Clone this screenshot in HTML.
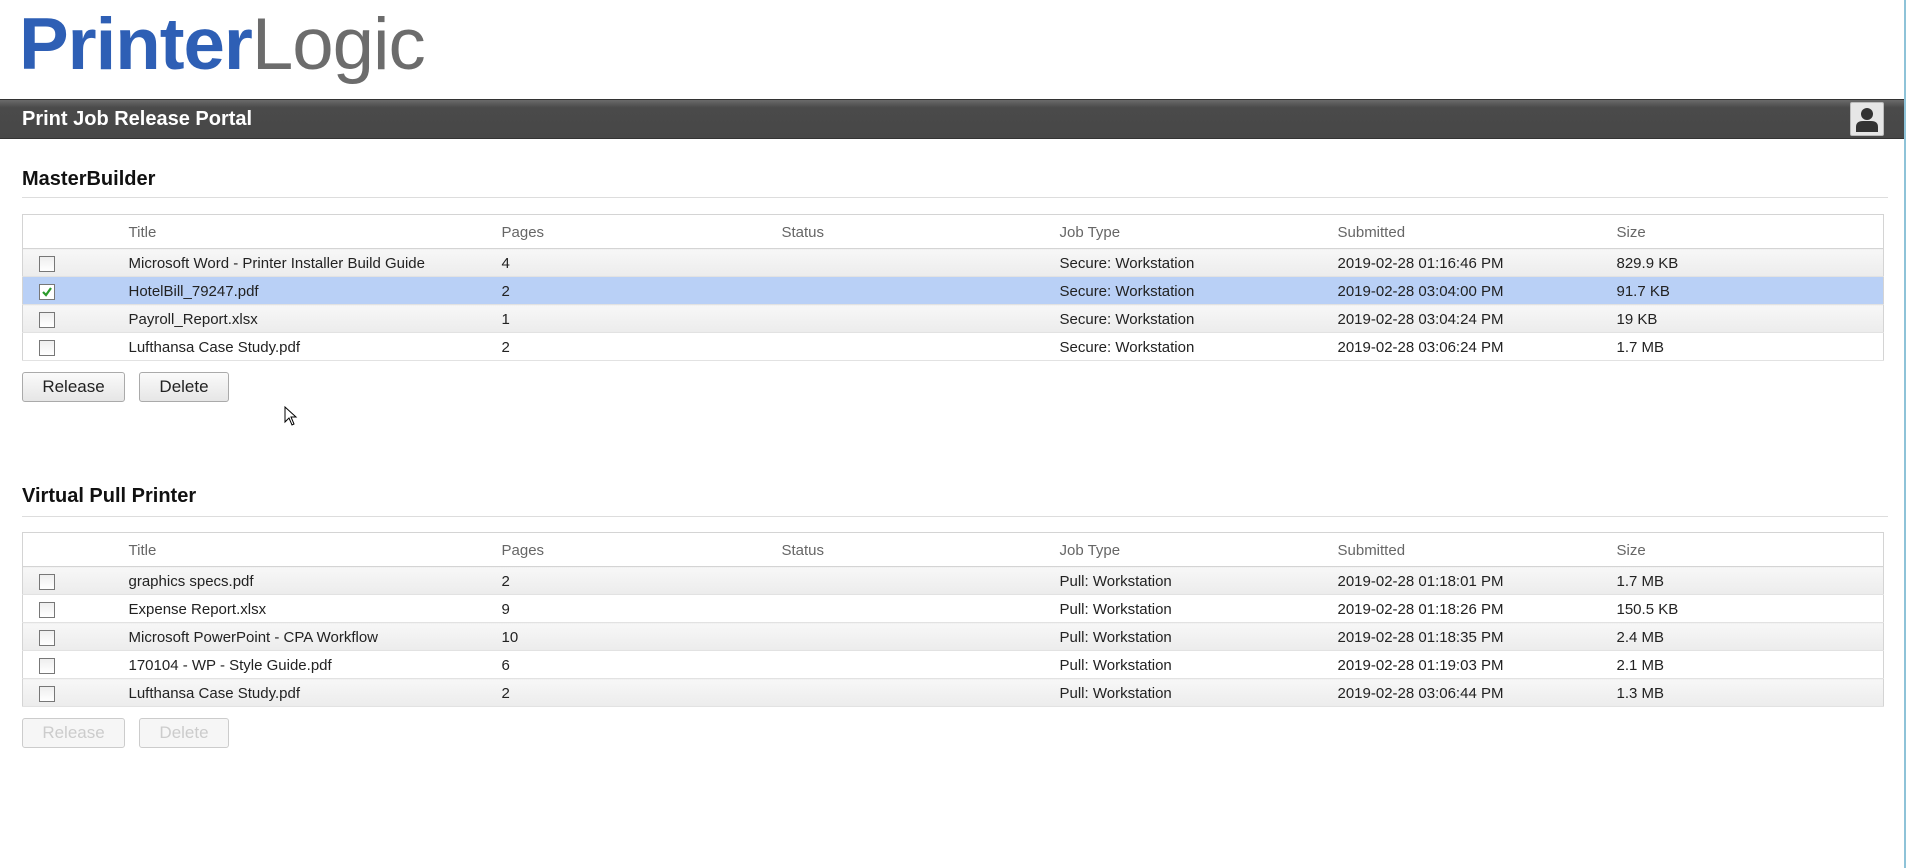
<!DOCTYPE html>
<html><head><meta charset="utf-8"><style>
*{margin:0;padding:0;box-sizing:border-box}
body{width:1910px;height:868px;background:#fff;font-family:"Liberation Sans",Arial,sans-serif;position:relative;overflow:hidden}
.abs{position:absolute}
.logo{left:19px;top:3px;font-size:73px;letter-spacing:-1px;white-space:nowrap;transform:scaleX(1.02);transform-origin:left top}
.logo b{color:#2e5fb5;font-weight:bold;letter-spacing:-1px}
.logo span{color:#6c6c6c;font-weight:normal}
.bar{left:0;top:99px;width:1906px;height:40px;background:linear-gradient(#6a6a6a,#4a4a4a 20%,#474747);border-top:1px solid #333;border-bottom:1px solid #333}
.bar .t{position:absolute;left:22px;top:8px;color:#fff;font-weight:bold;font-size:20px}
.av{left:1850px;top:102px;width:34px;height:34px;background:#e6e6e6;border:1px solid #bbb;border-radius:2px}
.h{left:22px;font-weight:bold;font-size:20px;color:#111}
.line{left:22px;width:1866px;height:1px;background:#ddd}
table{position:absolute;left:22px;width:1862px;border-collapse:collapse;border:1px solid #d4d4d4;font-size:15px;color:#222}
td{height:28px;padding:0;padding-top:2px;white-space:nowrap}
tr.hd td{height:34px;color:#666;border-bottom:1px solid #d4d4d4}
tr.g td{background:linear-gradient(#f7f7f7,#ececec)}
tr.s td{background:#b9d0f6}
tr.r td{border-bottom:1px solid #e2e2e2}
.cb{display:inline-block;width:16px;height:16px;border:1px solid #777;background:linear-gradient(#eee,#fff);margin-left:16px;vertical-align:middle;position:relative}
.btn{height:30px;border:1px solid #aaa;border-radius:3px;background:linear-gradient(#fafafa,#e6e6e6);font-size:17px;color:#222;text-align:center;line-height:28px}
.dis{color:#ccc;border-color:#ccc;background:#f6f6f6}
</style></head><body>
<div class="abs logo"><b>Printer</b><span>Logic</span></div>
<div class="abs bar"><div class="t">Print Job Release Portal</div></div>
<div class="abs av"><svg width="32" height="32" viewBox="0 0 32 32"><circle cx="16" cy="11" r="6" fill="#333"/><path d="M5 29 V24 Q5 18 12 18 H20 Q27 18 27 24 V29 Z" fill="#333"/></svg></div>
<div class="abs" style="left:1904px;top:0;width:2px;height:868px;background:#8ec3d8"></div>

<div class="abs h" style="top:168px">MasterBuilder</div>
<div class="abs line" style="top:197px"></div>
<table style="top:214px">
<colgroup><col style="width:106px"><col style="width:373px"><col style="width:280px"><col style="width:278px"><col style="width:278px"><col style="width:279px"><col></colgroup>
<tr class="hd"><td></td><td>Title</td><td>Pages</td><td>Status</td><td>Job Type</td><td>Submitted</td><td>Size</td></tr>
<tr class="g r"><td><span class="cb"></span></td><td>Microsoft Word - Printer Installer Build Guide</td><td>4</td><td></td><td>Secure: Workstation</td><td>2019-02-28 01:16:46 PM</td><td>829.9 KB</td></tr>
<tr class="s r"><td><span class="cb" style="background:#fff"><svg width="14" height="14" style="position:absolute;left:0;top:0"><path d="M3 7 L6 10 L11 3" stroke="#2a9a2a" stroke-width="2.2" fill="none"/></svg></span></td><td>HotelBill_79247.pdf</td><td>2</td><td></td><td>Secure: Workstation</td><td>2019-02-28 03:04:00 PM</td><td>91.7 KB</td></tr>
<tr class="g r"><td><span class="cb"></span></td><td>Payroll_Report.xlsx</td><td>1</td><td></td><td>Secure: Workstation</td><td>2019-02-28 03:04:24 PM</td><td>19 KB</td></tr>
<tr class="r"><td><span class="cb"></span></td><td>Lufthansa Case Study.pdf</td><td>2</td><td></td><td>Secure: Workstation</td><td>2019-02-28 03:06:24 PM</td><td>1.7 MB</td></tr>
</table>
<div class="abs btn" style="left:22px;top:372px;width:103px">Release</div>
<div class="abs btn" style="left:139px;top:372px;width:90px">Delete</div>
<svg class="abs" style="left:284px;top:406px" width="14" height="20"><path d="M1 1 L1 16 L5 12 L8 19 L10 18 L7 11 L12 11 Z" fill="#fff" stroke="#000" stroke-width="1"/></svg>

<div class="abs h" style="top:485px">Virtual Pull Printer</div>
<div class="abs line" style="top:516px"></div>
<table style="top:532px">
<colgroup><col style="width:106px"><col style="width:373px"><col style="width:280px"><col style="width:278px"><col style="width:278px"><col style="width:279px"><col></colgroup>
<tr class="hd"><td></td><td>Title</td><td>Pages</td><td>Status</td><td>Job Type</td><td>Submitted</td><td>Size</td></tr>
<tr class="g r"><td><span class="cb"></span></td><td>graphics specs.pdf</td><td>2</td><td></td><td>Pull: Workstation</td><td>2019-02-28 01:18:01 PM</td><td>1.7 MB</td></tr>
<tr class="r"><td><span class="cb"></span></td><td>Expense Report.xlsx</td><td>9</td><td></td><td>Pull: Workstation</td><td>2019-02-28 01:18:26 PM</td><td>150.5 KB</td></tr>
<tr class="g r"><td><span class="cb"></span></td><td>Microsoft PowerPoint - CPA Workflow</td><td>10</td><td></td><td>Pull: Workstation</td><td>2019-02-28 01:18:35 PM</td><td>2.4 MB</td></tr>
<tr class="r"><td><span class="cb"></span></td><td>170104 - WP - Style Guide.pdf</td><td>6</td><td></td><td>Pull: Workstation</td><td>2019-02-28 01:19:03 PM</td><td>2.1 MB</td></tr>
<tr class="g r"><td><span class="cb"></span></td><td>Lufthansa Case Study.pdf</td><td>2</td><td></td><td>Pull: Workstation</td><td>2019-02-28 03:06:44 PM</td><td>1.3 MB</td></tr>
</table>
<div class="abs btn dis" style="left:22px;top:718px;width:103px">Release</div>
<div class="abs btn dis" style="left:139px;top:718px;width:90px">Delete</div>
</body></html>
